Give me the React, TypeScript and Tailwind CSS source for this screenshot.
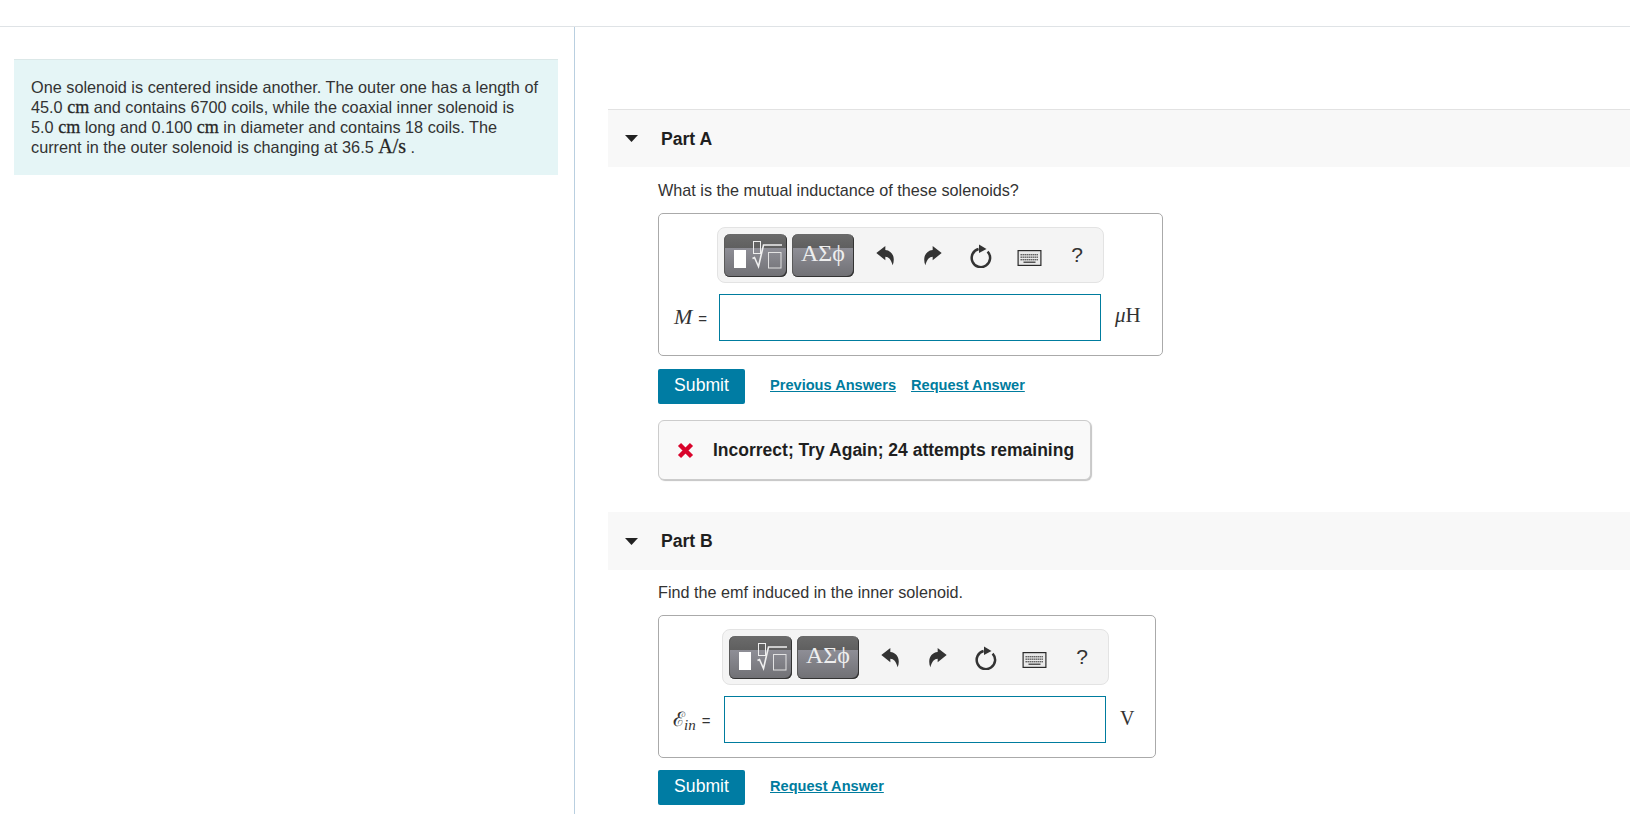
const sans = "font-['Liberation_Sans',Arial,sans-serif]";
const serif = "font-['Liberation_Serif','Times_New_Roman',serif]";

function TemplateIcon() {
  return (
    <svg width="63" height="43" viewBox="0 0 63 43" fill="none">
      <rect x="10" y="16" width="12" height="18" fill="#fff" />
      <rect x="29.5" y="7.5" width="7" height="12" stroke="#eeeeee" strokeWidth="1" />
      <path d="M28.5 24.5 L30.5 23.5 L34.5 32.5 L39.5 11 L58 11" stroke="#f0f0f0" strokeWidth="1.6" />
      <rect x="44.5" y="18.5" width="12.5" height="15.5" stroke="#e2e2e2" strokeWidth="1" />
    </svg>
  );
}

function UndoIcon({ flip }: { flip?: boolean }) {
  return (
    <svg width="20" height="22" viewBox="585 100 60 66" className={flip ? "-scale-x-100" : ""}>
      <path d="M589 127 L616 106 L616 118 C637 120 647 140 638 164 C633 146 626 138 616 138 L616 149 Z" fill="#333" />
    </svg>
  );
}

function ResetIcon() {
  return (
    <svg width="24" height="26" viewBox="0 0 24 26" fill="none">
      <path d="M18.6 9.6 A9.2 9.2 0 1 1 9.6 7" stroke="#333" strokeWidth="2.5" />
      <path d="M10 2.5 L17.5 7 L10 11 Z" fill="#333" />
    </svg>
  );
}

function KeyboardIcon() {
  const rows = [
    { y: 4, xs: [3, 5, 7, 9, 11, 13, 15, 17, 19] },
    { y: 6.5, xs: [3, 5, 7, 9, 11, 13, 15, 17, 19] },
    { y: 9, xs: [3, 5, 7, 9, 11, 13, 15, 17, 19] },
  ];
  return (
    <svg width="25" height="16" viewBox="0 0 24 16" className="mt-[6px]">
      <rect x="0.6" y="0.6" width="22.8" height="14.8" fill="#e9e9e9" stroke="#2a2a2a" strokeWidth="1.2" />
      {rows.map((r) =>
        r.xs.map((x) => <rect key={`${r.y}-${x}`} x={x} y={r.y} width="1.4" height="1.4" fill="#555" />)
      )}
      <rect x="6" y="11.5" width="12" height="1.5" fill="#555" />
    </svg>
  );
}

function Toolbar({ ml }: { ml: string }) {
  const slot = "w-[48px] flex items-center justify-center";
  const btn =
    "h-[43px] rounded-[6px] shadow-[inset_-1px_-1px_0_#333,inset_1px_0_0_#5a5a5a] bg-[linear-gradient(#6b6b6b_0,#5f5f5f_33%,#8e8e96_33%,#707074_100%)]";
  return (
    <div className={`${ml} mt-[13px] w-[387px] h-[56px] rounded-[8px] border border-[#e3e3e3] bg-[#f4f4f4] flex items-center pl-[6px]`}>
      <div className={`${btn} w-[63px]`}>
        <TemplateIcon />
      </div>
      <div className={`${btn} w-[62px] ml-[5px] flex items-center justify-center pb-[4px] text-[24px] text-[#eeeeee] ${serif}`}>
        ΑΣϕ
      </div>
      <div className="ml-[7px] flex items-center">
        <div className={slot}><UndoIcon /></div>
        <div className={slot}><UndoIcon flip /></div>
        <div className={slot}><ResetIcon /></div>
        <div className={slot}><KeyboardIcon /></div>
        <div className={`${slot} text-[21px] text-[#333] ${sans}`}>?</div>
      </div>
    </div>
  );
}

function Header({ title, border }: { title: string; border?: boolean }) {
  return (
    <div className={`ml-[33px] h-[58px] bg-[#f8f8f8] flex items-center ${border ? "border-t border-[#e2e2e2]" : ""}`}>
      <svg width="13" height="7" viewBox="0 0 13 7" className="ml-[17px]">
        <path d="M0 0 H13 L6.5 7 Z" fill="#222" />
      </svg>
      <span className={`ml-[23px] pt-[1px] text-[17.6px] font-bold text-[#1f1f1f] ${sans}`}>{title}</span>
    </div>
  );
}

function SubmitRow({ prev }: { prev?: boolean }) {
  const link = `text-[14.6px] font-bold text-[#007c9e] underline mb-[2px] ${sans}`;
  return (
    <div className="flex items-center">
      <button className={`w-[87px] h-[35px] pb-[2px] bg-[#007ca3] rounded-[2px] text-white text-[17.6px] ${sans}`}>Submit</button>
      <a className={`${link} ml-[25px]`}>{prev ? "Previous Answers" : "Request Answer"}</a>
      {prev && <a className={`${link} ml-[15px]`}>Request Answer</a>}
    </div>
  );
}

function Cm() {
  return <span className={`${serif} text-[18px] leading-[0] text-[#222] [-webkit-text-stroke:0.3px_#333]`}>cm</span>;
}

export default function App() {
  return (
    <div className={`h-[814px] w-full overflow-hidden bg-white ${sans}`}>
      <div className="h-[26px]" />
      <div className="flex h-[788px] border-t border-[#dfe3e6]">
        <div className="w-[575px] shrink-0 border-r border-[#b9cfe0] pt-[32px] pl-[14px]">
          <div className="w-[544px] h-[116px] border-t border-[#dbe8e8] bg-[#e5f5f6] pt-[17px] pl-[17px] text-[16.27px] leading-[20px] text-[#333]">
            <p className="w-[510px]">
              One solenoid is centered inside another. The outer one has a length of 45.0 <Cm /> and contains 6700
              coils, while the coaxial inner solenoid is 5.0 <Cm /> long and 0.100 <Cm /> in diameter and contains 18
              coils. The current in the outer solenoid is changing at 36.5{" "}
              <span className={`${serif} text-[20px] leading-[0] text-[#222] [-webkit-text-stroke:0.3px_#333]`}>A/s</span> .
            </p>
          </div>
        </div>

        <div className="flex-1 min-w-0 pt-[82px]">
          <Header title="Part A" border />
          <div className="pl-[83px] text-[#333]">
            <p className="mt-[13px] text-[16.2px] leading-[20px]">What is the mutual inductance of these solenoids?</p>
            <div className="mt-[13px] w-[505px] h-[143px] rounded-[5px] border border-[#aaaaaa]">
              <Toolbar ml="ml-[58px]" />
              <div className="mt-[11px] flex items-center">
                <div className={`w-[60px] pl-[15px] pb-[2px] text-[16px] ${serif}`}>
                  <i className="text-[22px]">M</i> <span className={`ml-[2px] text-[15px] ${sans}`}>=</span>
                </div>
                <div className="w-[382px] h-[47px] border border-[#007c9e] bg-white" />
                <div className={`pl-[14px] pb-[3px] text-[21px] ${serif}`}><i>μ</i>H</div>
              </div>
            </div>
            <div className="mt-[13px]"><SubmitRow prev /></div>
            <div className="mt-[16px] w-[433px] h-[60px] pt-[1px] rounded-[6px] border border-[#cccccc] bg-[#f9f9f9] shadow-[1px_1px_1px_#c4c4c4] flex items-center">
              <svg width="17" height="17" viewBox="0 0 17 17" className="ml-[18px]">
                <path d="M2.5 2.5 L14.5 14.5 M14.5 2.5 L2.5 14.5" stroke="#d9042b" strokeWidth="4.4" />
              </svg>
              <span className="ml-[19px] text-[17.5px] font-bold text-[#1f1f1f]">Incorrect; Try Again; 24 attempts remaining</span>
            </div>
          </div>

          <div className="mt-[32px]"><Header title="Part B" /></div>
          <div className="pl-[83px] text-[#333]">
            <p className="mt-[12px] text-[16.2px] leading-[20px]">Find the emf induced in the inner solenoid.</p>
            <div className="mt-[13px] w-[498px] h-[143px] rounded-[5px] border border-[#aaaaaa]">
              <Toolbar ml="ml-[63px]" />
              <div className="mt-[11px] flex items-center">
                <div className={`w-[65px] pl-[14px] pb-[2px] text-[16px] ${serif}`}>
                  <span className="font-['DejaVu_Serif',serif] text-[20px]">ℰ</span>
                  <i className="text-[15px] relative top-[4px] -ml-[1px]">in</i>{" "}
                  <span className={`ml-[2px] text-[15px] ${sans}`}>=</span>
                </div>
                <div className="w-[382px] h-[47px] border border-[#007c9e] bg-white" />
                <div className={`pl-[14px] pb-[3px] text-[20px] ${serif}`}>V</div>
              </div>
            </div>
            <div className="mt-[12px]"><SubmitRow /></div>
          </div>
        </div>
      </div>
    </div>
  );
}
